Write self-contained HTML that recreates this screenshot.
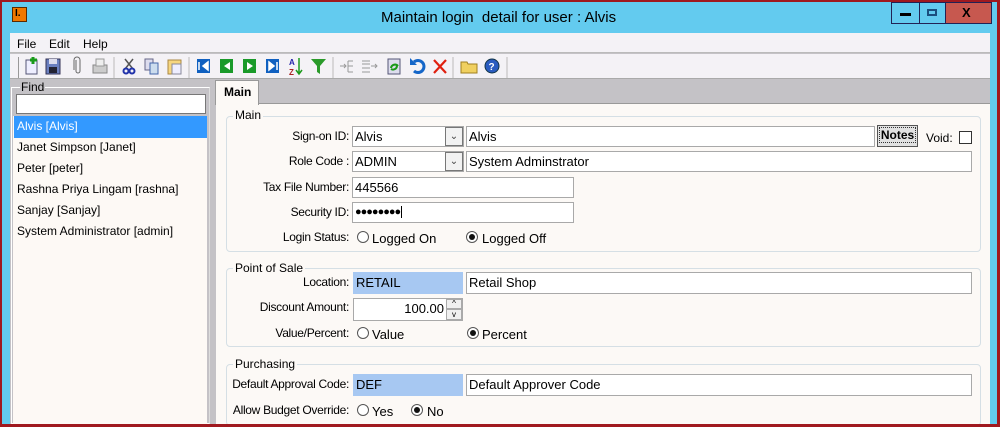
<!DOCTYPE html>
<html style="width:1000px;height:427px;overflow:hidden"><head><style>
*{box-sizing:border-box;margin:0;padding:0}
body{width:1000px;height:427px;overflow:hidden;background:#a0191f;font-family:"Liberation Sans",sans-serif;font-size:12px;color:#000;position:relative}
.a{position:absolute}
.t{position:absolute;white-space:nowrap}
.in{position:absolute;background:#fff;border:1px solid #a9a9a9;font-size:13px;padding:2px 2px;white-space:nowrap}
.lbl{position:absolute;text-align:right;white-space:nowrap;font-size:12px;letter-spacing:-0.3px}
.grp{position:absolute;border:1px solid #d5dfe5;border-radius:4px}
.gl{position:absolute;background:#fcf9f6;padding:0 2px;font-size:12px;top:-8px;left:6px}
.rad{position:absolute;width:12px;height:12px;border:1px solid #555;border-radius:50%;background:#fff}
.rad.on::after{content:"";position:absolute;left:2px;top:2px;width:6px;height:6px;border-radius:50%;background:#111}
</style></head><body>
<div class="a" style="left:2px;top:2px;width:995px;height:422px;background:#63cbef"></div>
<div class="a" style="left:12px;top:7px;width:15px;height:15px;background:#f07800;border:1px solid #5a2a00"></div>
<div class="t" style="left:15px;top:8px;font-size:10px;font-weight:bold;color:#000">I.</div>
<div class="t" style="left:381px;top:9px;font-size:15px">Maintain login&nbsp; detail for user : Alvis</div>
<div class="a" style="left:891px;top:2px;width:29px;height:22px;border:1px solid #225;background:#63cbef"></div>
<div class="a" style="left:900px;top:13px;width:11px;height:3px;background:#000"></div>
<div class="a" style="left:919px;top:2px;width:27px;height:22px;border:1px solid #225;background:#63cbef"></div>
<div class="a" style="left:927px;top:9px;width:10px;height:7px;border:2px solid #1b4f7f"></div>
<div class="a" style="left:945px;top:2px;width:47px;height:22px;border:1px solid #225;background:#c7584f"></div>
<div class="t" style="left:962px;top:5px;font-size:13px;font-weight:bold">X</div>
<div class="a" style="left:10px;top:33px;width:980px;height:391px;background:#c4c2c6"></div>
<div class="a" style="left:10px;top:33px;width:980px;height:20px;background:#f4f2f6;border-bottom:1px solid #bbb"></div>
<div class="t" style="left:17px;top:37px">File</div>
<div class="t" style="left:49px;top:37px">Edit</div>
<div class="t" style="left:83px;top:37px">Help</div>
<div class="a" style="left:10px;top:54px;width:980px;height:25px;background:#f4f2f6;border-bottom:1px solid #aaa"></div>
<div class="a" style="left:18px;top:57px;width:1px;height:21px;background:#999"></div>
<svg class="a" style="left:0;top:0" width="520" height="80">
<g stroke-width="1">
<rect x="26" y="60" width="11" height="14" fill="#eef" stroke="#557"/><path d="M33 57v7M30 60h7" stroke="#1a9a1a" stroke-width="3"/>
<rect x="46" y="59" width="14" height="15" fill="#6a7fc0" stroke="#335"/><rect x="49" y="59" width="8" height="5" fill="#dde"/><rect x="49" y="67" width="8" height="6" fill="#223"/>
<path d="M76 60v11a2 2 0 0 0 4 0v-11a3 3 0 0 0-6 0v10" fill="none" stroke="#666"/>
<rect x="93" y="65" width="14" height="8" fill="#ccc" stroke="#888"/><rect x="96" y="59" width="8" height="7" fill="#eee" stroke="#999"/>
<line x1="114" y1="57" x2="114" y2="78" stroke="#bbb"/>
<path d="M125 59l8 10M133 59l-8 10" stroke="#555" stroke-width="1.5"/><circle cx="126" cy="71" r="2.5" fill="none" stroke="#23a" stroke-width="2"/><circle cx="132" cy="71" r="2.5" fill="none" stroke="#23a" stroke-width="2"/>
<rect x="145" y="59" width="8" height="11" fill="#dde" stroke="#668"/><rect x="150" y="63" width="8" height="11" fill="#cde" stroke="#46a"/>
<rect x="168" y="60" width="13" height="14" fill="#f6d680" stroke="#a84"/><rect x="172" y="64" width="9" height="10" fill="#eef" stroke="#889"/>
<line x1="189" y1="57" x2="189" y2="78" stroke="#bbb"/>
<rect x="197" y="59" width="13" height="14" fill="#1060c0"/><path d="M199 62v8M208 62l-5 4 5 4z" fill="#fff" stroke="#fff" stroke-width="1.5"/>
<rect x="220" y="59" width="13" height="14" fill="#1a9a2a"/><path d="M230 62l-6 4 6 4z" fill="#fff"/>
<rect x="243" y="59" width="13" height="14" fill="#1a9a2a"/><path d="M247 62l6 4-6 4z" fill="#fff"/>
<rect x="266" y="59" width="13" height="14" fill="#1060c0"/><path d="M277 62v8M269 62l5 4-5 4z" fill="#fff" stroke="#fff" stroke-width="1.5"/>
<text x="289" y="65" font-size="8" fill="#22a" font-weight="bold">A</text><text x="289" y="75" font-size="8" fill="#a22" font-weight="bold">Z</text><path d="M299 58v15M296 70l3 4 3-4" stroke="#1a9a1a" fill="none" stroke-width="1.5"/>
<path d="M311 59h15l-6 7v8l-3-2v-6z" fill="#2a9a2a"/>
<line x1="333" y1="57" x2="333" y2="78" stroke="#bbb"/>
<path d="M340 66h6M344 64l2 2-2 2M348 61h5M348 61v11M348 66h5M348 72h5" stroke="#999" fill="none"/>
<path d="M362 61h8M362 64h8M362 68h8M362 72h8M371 66h6M375 64l2 2-2 2" stroke="#999" fill="none"/>
<rect x="388" y="59" width="12" height="15" fill="#dde" stroke="#557"/><path d="M391 68a4 4 0 0 1 7-2M397 66a4 4 0 0 1-6 3" stroke="#1a9a1a" fill="none" stroke-width="2"/>
<path d="M414 62a6 6 0 1 1 0 9" stroke="#1566c8" stroke-width="3" fill="none"/><path d="M410 58v7h7z" fill="#1566c8"/>
<path d="M434 60l12 13M446 60l-12 13" stroke="#e02010" stroke-width="2.2"/>
<line x1="453" y1="57" x2="453" y2="78" stroke="#bbb"/>
<path d="M461 62h6l1 2h9v9h-16z" fill="#f0d060" stroke="#a08020"/>
<circle cx="492" cy="66" r="7" fill="#2a5cc0" stroke="#134"/><text x="488.5" y="70" font-size="10" font-weight="bold" fill="#fff">?</text>
<line x1="507" y1="57" x2="507" y2="78" stroke="#bbb"/>
</g></svg>
<div class="a" style="left:11px;top:87px;width:199px;height:337px;border:1px solid #fff;border-right-color:#ddd"></div>
<div class="t" style="left:20px;top:80px;background:#c4c2c6;padding:0 1px">Find</div>
<div class="a" style="left:16px;top:94px;width:190px;height:20px;background:#fff;border:1px solid #777"></div>
<div class="a" style="left:13px;top:116px;width:194px;height:308px;background:#fdf9f5"></div>
<div class="a" style="left:14px;top:116px;width:193px;height:22px;background:#3399ff"></div>
<div class="t" style="left:17px;top:119px;color:#fff">Alvis [Alvis]</div>
<div class="t" style="left:17px;top:140px">Janet Simpson [Janet]</div>
<div class="t" style="left:17px;top:161px">Peter [peter]</div>
<div class="t" style="left:17px;top:182px">Rashna Priya Lingam [rashna]</div>
<div class="t" style="left:17px;top:203px">Sanjay [Sanjay]</div>
<div class="t" style="left:17px;top:224px">System Administrator [admin]</div>
<div class="a" style="left:216px;top:103px;width:774px;height:321px;background:#fcf9f6;border-top:1px solid #999;overflow:hidden">
</div>
<div class="a" style="left:215px;top:80px;width:44px;height:25px;background:#fcf9f6;border:1px solid #999;border-bottom:none"></div>
<div class="t" style="left:224px;top:85px;font-weight:bold">Main</div>

<div class="grp" style="left:226px;top:116px;width:755px;height:136px"><span class="gl" style="top:-9px">Main</span></div>
<div class="lbl" style="right:651px;top:129px">Sign-on ID:</div>
<div class="in" style="left:352px;top:126px;width:112px;height:21px">Alvis</div>
<div class="a" style="left:445px;top:127px;width:18px;height:19px;border:1px solid #777;background:#f2f2f2;font-size:10px;text-align:center;line-height:17px;color:#444">&#8964;</div>
<div class="in" style="left:466px;top:126px;width:409px;height:21px">Alvis</div>
<div class="a" style="left:877px;top:125px;width:41px;height:22px;background:#e1e1e1;border:1px solid #555;font-weight:bold;font-size:12px;text-align:center;line-height:18px"><span style="border:1px dotted #333;padding:0 1px">Notes</span></div>
<div class="t" style="left:926px;top:131px">Void:</div>
<div class="a" style="left:959px;top:131px;width:13px;height:13px;background:#fff;border:1px solid #333"></div>

<div class="lbl" style="right:651px;top:154px">Role Code :</div>
<div class="in" style="left:352px;top:151px;width:112px;height:21px">ADMIN</div>
<div class="a" style="left:445px;top:152px;width:18px;height:19px;border:1px solid #777;background:#f2f2f2;font-size:10px;text-align:center;line-height:17px;color:#444">&#8964;</div>
<div class="in" style="left:466px;top:151px;width:506px;height:21px">System Adminstrator</div>

<div class="lbl" style="right:651px;top:180px">Tax File Number:</div>
<div class="in" style="left:352px;top:177px;width:222px;height:21px">445566</div>
<div class="lbl" style="right:651px;top:205px">Security ID:</div>
<div class="in" style="left:352px;top:202px;width:222px;height:21px;font-size:11px;letter-spacing:-1px;padding-top:3px">&#9679;&#9679;&#9679;&#9679;&#9679;&#9679;&#9679;&#9679;<span style="border-left:1px solid #000;margin-left:1px"></span></div>
<div class="lbl" style="right:651px;top:230px">Login Status:</div>
<div class="rad" style="left:357px;top:231px"></div><div class="t" style="left:372px;top:231px;font-size:13px">Logged On</div>
<div class="rad on" style="left:466px;top:231px"></div><div class="t" style="left:482px;top:231px;font-size:13px">Logged Off</div>

<div class="grp" style="left:226px;top:268px;width:755px;height:79px"><span class="gl">Point of Sale</span></div>
<div class="lbl" style="right:651px;top:275px">Location:</div>
<div class="in" style="left:353px;top:272px;width:110px;height:22px;background:#a7c8f2;border-color:#a7c8f2">RETAIL</div>
<div class="in" style="left:466px;top:272px;width:506px;height:22px">Retail Shop</div>
<div class="lbl" style="right:651px;top:300px">Discount Amount:</div>
<div class="in" style="left:353px;top:298px;width:110px;height:23px;text-align:right;padding-right:18px">100.00</div>
<div class="a" style="left:446px;top:299px;width:16px;height:10px;border:1px solid #aaa;background:#f0f0f0;font-size:8px;text-align:center;line-height:8px">^</div>
<div class="a" style="left:446px;top:309px;width:16px;height:11px;border:1px solid #aaa;background:#f0f0f0;font-size:8px;text-align:center;line-height:9px">v</div>
<div class="lbl" style="right:651px;top:326px">Value/Percent:</div>
<div class="rad" style="left:357px;top:327px"></div><div class="t" style="left:372px;top:327px;font-size:13px">Value</div>
<div class="rad on" style="left:467px;top:327px"></div><div class="t" style="left:482px;top:327px;font-size:13px">Percent</div>

<div class="grp" style="left:226px;top:364px;width:755px;height:62px"><span class="gl">Purchasing</span></div>
<div class="lbl" style="right:651px;top:377px">Default Approval Code:</div>
<div class="in" style="left:353px;top:374px;width:110px;height:22px;background:#a7c8f2;border-color:#a7c8f2">DEF</div>
<div class="in" style="left:466px;top:374px;width:506px;height:22px">Default Approver Code</div>
<div class="lbl" style="right:651px;top:403px">Allow Budget Override:</div>
<div class="rad" style="left:357px;top:404px"></div><div class="t" style="left:372px;top:404px;font-size:13px">Yes</div>
<div class="rad on" style="left:411px;top:404px"></div><div class="t" style="left:427px;top:404px;font-size:13px">No</div>
<div class="a" style="left:0;top:424px;width:1000px;height:3px;background:#a0191f"></div>
</body></html>
